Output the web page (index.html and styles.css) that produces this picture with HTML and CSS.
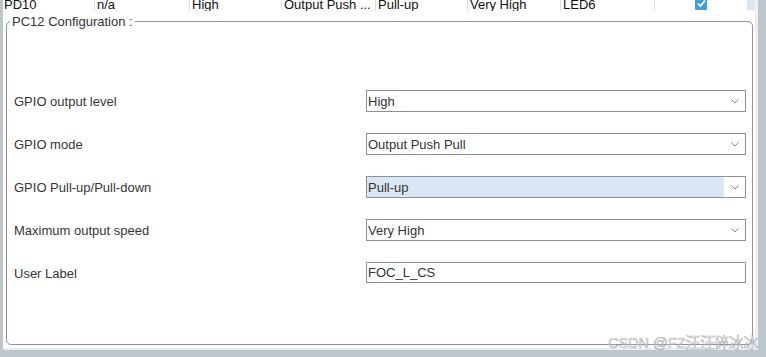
FILE: index.html
```html
<!DOCTYPE html>
<html>
<head>
<meta charset="utf-8">
<link rel="stylesheet" href="styles.css">
</head>
<body>
<div class="window">
  <div class="table-row">
    <div class="cell first">PD10</div>
    <div class="cell">n/a</div>
    <div class="cell">High</div>
    <div class="cell">Output Push ...</div>
    <div class="cell">Pull-up</div>
    <div class="cell">Very High</div>
    <div class="cell">LED6</div>
    <div class="cell check-cell">
      <span class="checkbox">
        <svg width="13" height="13" viewBox="0 0 13 13"><polyline points="3,6.5 5.5,9 10,3.5" fill="none" stroke="#fff" stroke-width="1.8"/></svg>
      </span>
    </div>
    <div class="cell sel-cell"></div>
  </div>
  <fieldset class="config">
    <legend class="legend">PC12 Configuration :</legend>
    <div class="form">
      <div class="label">GPIO output level</div>
      <div class="select"><span class="value">High</span><span class="arrow"><svg width="8" height="5" viewBox="0 0 8 5"><polyline points="0.5,0.5 4,4 7.5,0.5" fill="none" stroke="#8a8a8a" stroke-width="1"/></svg></span></div>

      <div class="label">GPIO mode</div>
      <div class="select"><span class="value">Output Push Pull</span><span class="arrow"><svg width="8" height="5" viewBox="0 0 8 5"><polyline points="0.5,0.5 4,4 7.5,0.5" fill="none" stroke="#8a8a8a" stroke-width="1"/></svg></span></div>

      <div class="label">GPIO Pull-up/Pull-down</div>
      <div class="select focused"><span class="value">Pull-up</span><span class="arrow"><svg width="8" height="5" viewBox="0 0 8 5"><polyline points="0.5,0.5 4,4 7.5,0.5" fill="none" stroke="#8a8a8a" stroke-width="1"/></svg></span></div>

      <div class="label">Maximum output speed</div>
      <div class="select"><span class="value">Very High</span><span class="arrow"><svg width="8" height="5" viewBox="0 0 8 5"><polyline points="0.5,0.5 4,4 7.5,0.5" fill="none" stroke="#8a8a8a" stroke-width="1"/></svg></span></div>

      <div class="label">User Label</div>
      <div class="text-input">FOC_L_CS</div>
    </div>
  </fieldset>
  <div class="watermark">CSDN @FZ汪汪碎冰冰</div>
</div>
</body>
</html>
```

FILE: styles.css
```css
* { box-sizing: border-box; }
html, body { margin: 0; padding: 0; }
body {
  width: 766px;
  height: 357px;
  background: #bdc6cb;
  font-family: "Liberation Sans", Arial, sans-serif;
  font-size: 13px;
  color: #333;
  overflow: hidden;
}
.window {
  position: relative;
  margin-left: 3px;
  width: 755px;
  height: 350px;
  background: #fff;
  border-right: 3px solid #edf0f2;
  border-bottom: 2px solid #e9edf0;
  padding-bottom: 3px;
  display: flex;
  flex-direction: column;
}
.table-row {
  display: grid;
  grid-template-columns: 92px 95px 92px 94px 92px 93px 94px 92px 8px;
  height: 11px;
  overflow: hidden;
  flex: none;
}
.cell {
  line-height: 10px;
  padding-left: 2px;
  color: #111;
  border-right: 1px solid #dcdfe2;
  white-space: nowrap;
  overflow: hidden;
}
.cell.first { padding-left: 1px; }
.check-cell {
  display: flex;
  justify-content: center;
  align-items: flex-end;
  padding-left: 0;
  border-right: none;
}
.checkbox {
  display: block;
  width: 12px;
  height: 13px;
  margin-bottom: 1px;
  background: #3d9fe3;
  border-radius: 1px;
}
.checkbox svg { display: block; }
.sel-cell {
  background: #dbe8f4;
  border-right: none;
  height: 10px;
}
.config {
  flex: 1;
  margin: 3px 2px 0 3px;
  padding: 0;
  border: 1px solid #8e9499;
  border-radius: 5px;
  min-width: 0;
}
.legend {
  margin-left: 3px;
  padding: 0 2px;
  line-height: 15px;
  color: #333;
}
.form {
  display: grid;
  grid-template-columns: 352px 380px;
  grid-auto-rows: 22px;
  row-gap: 21px;
  padding: 61px 0 0 7px;
}
.label {
  display: flex;
  align-items: center;
  color: #363636;
}
.select {
  display: flex;
  border: 1px solid #8c9297;
  background: #fff;
}
.value {
  flex: 1;
  display: flex;
  align-items: center;
  padding-left: 1px;
  color: #333;
}
.focused .value { background: #d9e7f4; }
.arrow {
  width: 21px;
  display: flex;
  align-items: center;
  justify-content: center;
  padding-top: 1px;
}
.arrow svg { display: block; }
.text-input {
  height: 21px;
  border: 1px solid #8c9297;
  display: flex;
  align-items: center;
  padding-left: 1px;
  color: #333;
}
.watermark {
  position: absolute;
  right: -3px;
  bottom: -4px;
  font-family: "Liberation Sans", "Noto Sans CJK SC", sans-serif;
  font-size: 14.5px;
  line-height: 18px;
  color: rgba(255, 255, 255, 0.75);
  -webkit-text-stroke: 0.7px rgba(130, 135, 140, 0.6);
  white-space: nowrap;
}
```
